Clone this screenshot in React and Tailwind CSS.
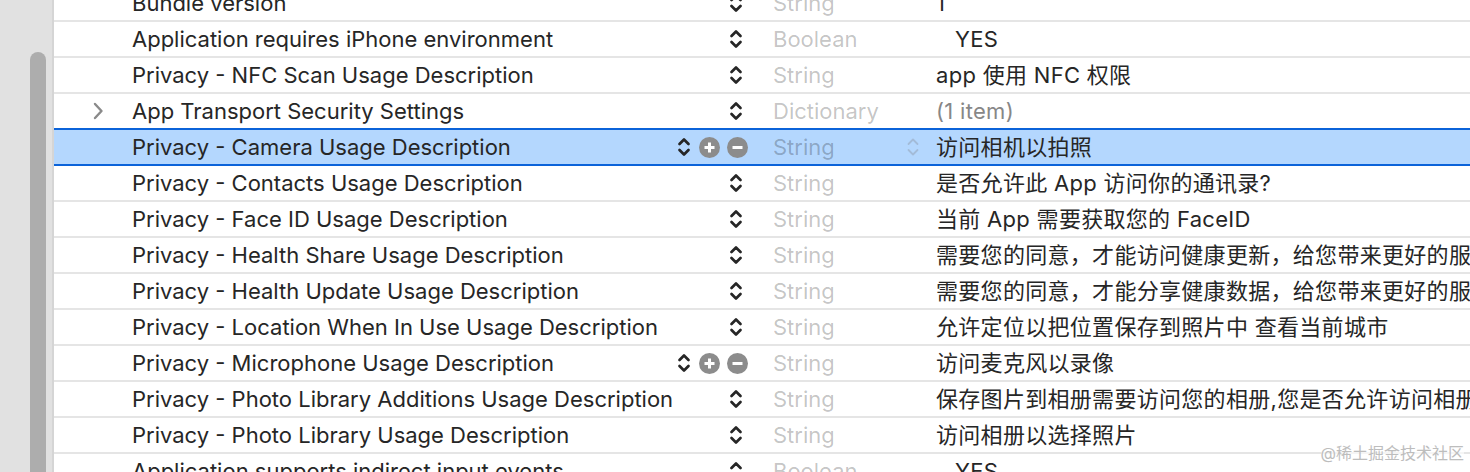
import React from 'react';

const rows = [
    { key: 'Bundle version', type: 'String', value: '1' },
    { key: 'Application requires iPhone environment', type: 'Boolean', value: 'YES', bool: true },
    { key: 'Privacy - NFC Scan Usage Description', type: 'String', value: 'app 使用 NFC 权限' },
    { key: 'App Transport Security Settings', type: 'Dictionary', value: '(1 item)', folder: true, beforeSelected: true },
    { key: 'Privacy - Camera Usage Description', type: 'String', value: '访问相机以拍照', selected: true },
    { key: 'Privacy - Contacts Usage Description', type: 'String', value: '是否允许此 App 访问你的通讯录?' },
    { key: 'Privacy - Face ID Usage Description', type: 'String', value: '当前 App 需要获取您的 FaceID' },
    { key: 'Privacy - Health Share Usage Description', type: 'String', value: '需要您的同意，才能访问健康更新，给您带来更好的服务' },
    { key: 'Privacy - Health Update Usage Description', type: 'String', value: '需要您的同意，才能分享健康数据，给您带来更好的服务' },
    { key: 'Privacy - Location When In Use Usage Description', type: 'String', value: '允许定位以把位置保存到照片中 查看当前城市' },
    { key: 'Privacy - Microphone Usage Description', type: 'String', value: '访问麦克风以录像', hover: true },
    { key: 'Privacy - Photo Library Additions Usage Description', type: 'String', value: '保存图片到相册需要访问您的相册,您是否允许访问相册' },
    { key: 'Privacy - Photo Library Usage Description', type: 'String', value: '访问相册以选择照片' },
    { key: 'Application supports indirect input events', type: 'Boolean', value: 'YES', bool: true },
];

const font = { fontFamily: 'Inter, "Noto Sans CJK SC", sans-serif' };

// up/down popup arrows
const Stepper = ({ light }) => (
    <svg width="14" height="22" viewBox="0 0 14 22" fill="none">
        <path
            d="M2.5 8 L7 3.5 L11.5 8 M2.5 14 L7 18.5 L11.5 14"
            stroke={light ? '#a3bbd8' : '#262626'}
            strokeWidth={light ? 1.8 : 2.7}
            strokeLinecap="round"
            strokeLinejoin="round"
        />
    </svg>
);

const CircleBtn = ({ plus }) => (
    <svg width="21" height="21" viewBox="0 0 21 21">
        <circle cx="10.5" cy="10.5" r="10.5" fill="#8c8c8c" />
        <path d={plus ? 'M5.5 10.5 H15.5 M10.5 5.5 V15.5' : 'M5.5 10.5 H15.5'} stroke="#fff" strokeWidth="3" />
    </svg>
);

const Row = ({ row }) => {
    let border = 'border-[#e5e5e5]';
    if (row.selected || row.beforeSelected) border = 'border-[#0b63d9]';

    return (
        <div className={`flex shrink-0 items-center h-[36px] border-b-2 ${border} ${row.selected ? 'bg-[#b4d7fe]' : ''}`}>
            {/* disclosure */}
            <div className="w-[78px] shrink-0 flex items-center justify-end pr-[28px]">
                {row.folder && (
                    <svg width="12" height="20" viewBox="0 0 12 20" fill="none">
                        <path d="M3 3 L9.5 10 L3 17" stroke="#8a8a8a" strokeWidth="2.4" strokeLinecap="round" strokeLinejoin="round" />
                    </svg>
                )}
            </div>

            {/* key */}
            <div className="w-[540px] shrink-0 text-[22px] text-[#262626] whitespace-nowrap overflow-hidden">{row.key}</div>

            {/* controls */}
            <div className="w-[88px] shrink-0 flex items-center">
                {row.selected || row.hover ? (
                    <div className="flex items-center pl-[5px] gap-[8px]">
                        <Stepper />
                        <div className="flex items-center gap-[7px]">
                            <CircleBtn plus />
                            <CircleBtn />
                        </div>
                    </div>
                ) : (
                    <div className="pl-[57px] flex items-center">
                        <Stepper />
                    </div>
                )}
            </div>

            {/* type */}
            <div className="w-[176px] shrink-0 flex items-center justify-between pl-[13px] pr-[16px] text-[22px] text-black/[0.24]">
                <span>{row.type}</span>
                {row.selected && <Stepper light />}
            </div>

            {/* value */}
            <div
                className={`flex-1 min-w-0 whitespace-nowrap overflow-hidden text-[22px] tracking-[0.3px] ${
                    row.folder ? 'text-[#878787]' : 'text-[#262626]'
                } ${row.bool ? 'pl-[19px]' : ''}`}
            >
                {row.value}
            </div>
        </div>
    );
};

export default function App() {
    return (
        <div className="w-[1470px] h-[472px] overflow-hidden flex bg-white relative" style={font}>
            {/* left scroll area */}
            <div className="w-[54px] shrink-0 h-full bg-[#e1e1e1] border-r-2 border-[#d5d5d5] relative">
                <div className="absolute left-[30px] top-[52px] w-[16px] h-[440px] rounded-full bg-[#adadad]" />
            </div>

            {/* plist table */}
            <div className="flex-1 min-w-0 flex flex-col -mt-[14px]">
                {rows.map((r) => (
                    <Row key={r.key} row={r} />
                ))}
            </div>

            {/* watermark */}
            <div className="absolute right-[6px] bottom-[7px] text-[16px] text-[#bdbdbd] whitespace-nowrap bg-white/60">
                @稀土掘金技术社区
            </div>
        </div>
    );
}
